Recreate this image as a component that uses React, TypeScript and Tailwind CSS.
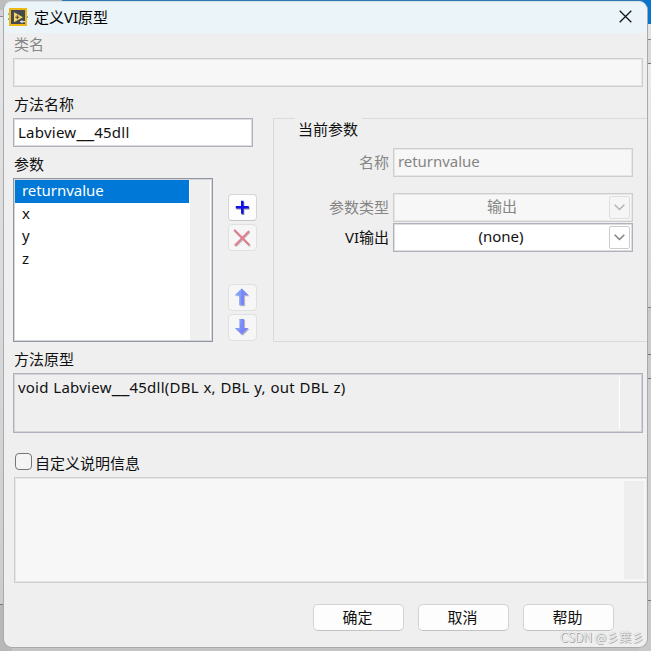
import type { ReactNode } from 'react'
import { clsx } from 'clsx'

const PARAMS = ['returnvalue', 'x', 'y', 'z']
const ACTIONS = ['确定', '取消', '帮助']

const DIM_FRAME = 'border border-[#cecece] bg-[#f7f7f7] p-px shadow-[inset_0_0_0_1px_#e6e6e6]'
const LIVE_FRAME = 'border border-[#b0b1ba] bg-white p-px shadow-[inset_0_0_0_1px_#dcdce2]'

/** Method prototype dialog, floating over the edge of the main window. */
export default function App() {
  return (
    <div className="relative h-[651px] w-[651px] overflow-hidden bg-[#c4c4c4] pt-px font-['Noto_Sans','Noto_Sans_CJK_SC',sans-serif] text-[15px] leading-[22px] text-[#111]">
      <Backdrop />
      <div className="relative ml-[3px] flex h-[647px] w-[645px] flex-col overflow-hidden rounded-[9px] border border-[#a9aaab] border-t-[#d5e2ea] bg-[#efefef]">
        <TitleBar />
        <main className="flex flex-1 flex-col pl-[9px]">
          <Label dim>类名</Label>
          <div className={clsx('mt-[2px] h-[29px] w-[630px]', DIM_FRAME)} />

          <div className="flex h-[254px]">
            <div className="w-[200px] shrink-0 pt-[6px]">
              <Label>方法名称</Label>
              <div className={clsx('mt-[2px] h-[29px] w-[240px]', LIVE_FRAME)}>
                <div className="pl-[3px] leading-[24px]"><MethodName /></div>
              </div>
              <div className="h-[6px]" />
              <Label>参数</Label>
              <ParamList />
            </div>
            <div className="ml-[15px] flex w-[29px] shrink-0 flex-col pt-[107px]">
              <ToolButton><PlusIcon /></ToolButton>
              <ToolButton dim className="mt-[3px]"><CrossIcon /></ToolButton>
              <ToolButton dim className="mt-[33px]"><ArrowIcon /></ToolButton>
              <ToolButton dim className="mt-[3px]"><ArrowIcon down /></ToolButton>
            </div>
            <CurrentParam />
          </div>

          <div className="h-[7px]" />
          <Label>方法原型</Label>
          <div className="mt-[2px] flex h-[60px] w-[630px] justify-between border border-[#b0b1ba] py-[3px] pl-[4px] pr-[22px] shadow-[inset_0_0_0_1px_#d2d2d8]">
            <span className="-mt-px tracking-[.2px] [word-spacing:.6px]">
              void <MethodName />(DBL x, DBL y, out DBL z)
            </span>
            <span className="w-[1.5px] bg-white" />
          </div>

          <label className="mt-[19px] flex h-[22px] items-center pl-[2px]">
            <span className="mb-[4px] size-[17px] rounded-[4px] border-[1.5px] border-[#767676] bg-[#f4f4f4]" />
            <span className="ml-[3px]">自定义说明信息</span>
          </label>
          <div className="ml-px mt-[3px] flex h-[106px] justify-end border border-r-0 border-[#cecece] bg-[#f7f7f7] py-[3px] pr-[3px] shadow-[inset_0_0_0_1px_#e6e6e6]">
            <div className="w-[20px] bg-[#eeeeee]" />
          </div>

          <div className="mt-[21px] flex gap-[14px] pl-[300px]">
            {ACTIONS.map((action) => (
              <button
                key={action}
                className="h-[27px] w-[91px] rounded-[5px] border border-[#d3d3d3] border-b-[#c3c3c3] bg-[#fdfdfd] pb-px pr-[2px]"
              >
                {action}
              </button>
            ))}
          </div>
        </main>
      </div>
      <div className="absolute left-[560px] top-[628px] whitespace-nowrap font-['Noto_Sans_CJK_SC',sans-serif] text-[12.5px] font-light leading-[18px] text-[#fafafa] [text-shadow:1px_1px_0_#999,0_0_1px_#999]">
        CSDN @彡葉彡
      </div>
    </div>
  )
}

/** Slivers of the main window that show around the dialog. */
function Backdrop() {
  return (
    <div className="absolute inset-0 flex flex-col">
      <div className="flex h-[10px] shrink-0">
        <div className="w-[62px] bg-[#bdbdbd]" />
        <div className="flex-1 bg-[#3276b1]" />
        <div className="w-[8px] bg-[#0874d0]" />
      </div>
      <div className="flex flex-1 justify-between">
        <div className="flex w-[12px] flex-col bg-[#d3d3d3]">
          <div className="h-[6px]" />
          <div className="h-px bg-[#8c8c8c]" />
          <div className="h-[587px] bg-linear-to-b from-[#e6e6e6] to-[#cccccc]" />
          <div className="h-px bg-[#777b80]" />
          <div className="flex-1 bg-[#b8b8b8]" />
        </div>
        <div className="flex w-[12px] flex-col bg-[#c9c9c9]">
          <div className="h-[14px] bg-[#0874d0]" />
          <div className="h-[15px] bg-[#e3e3e3]" />
          <div className="h-px bg-[#858585]" />
          <div className="h-[23px] bg-[#dadada]" />
          <div className="h-px bg-[#777]" />
          <div className="h-[243px] bg-linear-to-b from-[#ececec] to-[#d3d3d3]" />
          <div className="h-px bg-[#858585]" />
          <div className="h-[46px] bg-[#cbcbcb]" />
          <div className="h-px bg-[#70757b]" />
          <div className="h-[23px] bg-[#cbcbcb]" />
          <div className="h-px bg-[#777]" />
          <div className="h-[221px] bg-[#cecece]" />
          <div className="h-px bg-[#777b88]" />
        </div>
      </div>
    </div>
  )
}

function TitleBar() {
  return (
    <header className="flex h-[31px] shrink-0 items-center bg-[#ebf4f8] pb-[2px] pl-[4px] pr-[15px]">
      <AppIcon />
      <h1 className="ml-[6px] flex-1 text-[15px] leading-[20px] text-black">定义VI原型</h1>
      <svg width="13" height="13" viewBox="0 0 13 13" stroke="#151515" strokeWidth="1.3">
        <path d="M.7.7l11.6 11.6M12.3.7L.7 12.3" />
      </svg>
    </header>
  )
}

function Label({ children, dim }: { children: ReactNode; dim?: boolean }) {
  return <div className={clsx('h-[23px] pl-px leading-[23px]', dim && 'text-[#858585]')}>{children}</div>
}

function MethodName() {
  return (
    <span className="tracking-[.25px]">
      Labview<span className="text-[20px] leading-none tracking-normal">__</span>45dll
    </span>
  )
}

function ParamList() {
  return (
    <div className="mt-[2px] flex h-[164px] w-[200px] border border-[#92969f] bg-white p-px shadow-[inset_0_0_0_1px_#d3d6db]">
      <ul className="w-[175px]">
        {PARAMS.map((name, i) => (
          <li
            key={name}
            className={clsx(
              'h-[22.7px] w-[174px] pl-[7px] leading-[21px]',
              i === 0 && 'bg-[#0078d7] tracking-[-.05px] text-white',
            )}
          >
            {name}
          </li>
        ))}
      </ul>
      <div className="flex-1 border-r border-white bg-[#efefef]" />
    </div>
  )
}

/** Fields of the selected parameter; the frame runs off the dialog's right edge. */
function CurrentParam() {
  return (
    <section className="ml-[16px] flex flex-1 flex-col pt-[31px]">
      <div className="flex h-[224px] shrink-0 flex-col border border-r-0 border-[#dadada]">
        <h2 className="-mt-px ml-[21px] h-[22px] w-[67px] bg-[#efefef] pl-[3px]">当前参数</h2>
        <Field label="名称" dim className="mt-[8px]">
          <span className="pl-[3px] tracking-[-.05px]">returnvalue</span>
        </Field>
        <Field label="参数类型" dim className="mt-[16px]">
          <span className="flex-1 text-center">输出</span>
          <DropButton dim />
        </Field>
        <Field label="VI输出" className="mt-px">
          <span className="flex-1 pr-[2px] text-center">(none)</span>
          <DropButton />
        </Field>
      </div>
    </section>
  )
}

function Field({ label, dim, className, children }: { label: string; dim?: boolean; className?: string; children: ReactNode }) {
  return (
    <div className={clsx('flex h-[29px] items-center leading-[20px]', dim && 'text-[#858585]', className)}>
      <span className="w-[115px] pb-[2px] text-right">{label}</span>
      <div className={clsx('ml-[4px] h-[29px] w-[240px]', dim ? DIM_FRAME : LIVE_FRAME)}>
        <div className="flex h-[25px] items-center leading-[23px] [&>span:first-child]:pb-[2px]">{children}</div>
      </div>
    </div>
  )
}

function DropButton({ dim }: { dim?: boolean }) {
  return (
    <span
      className={clsx(
        'mr-px flex h-[23px] w-[21px] items-center justify-center rounded-[2px] border',
        dim ? 'border-[#dedede] bg-[#f5f5f5]' : 'border-[#cccccc] bg-white',
      )}
    >
      <svg width="11" height="7" viewBox="0 0 11 7" fill="none" stroke={dim ? '#b4b4b4' : '#808080'} strokeWidth="1.5">
        <path d="M.7.8l4.8 4.7L10.3.8" />
      </svg>
    </span>
  )
}

function ToolButton({ children, dim, className }: { children: ReactNode; dim?: boolean; className?: string }) {
  return (
    <button
      className={clsx(
        'flex h-[27px] w-[29px] shrink-0 items-center justify-center rounded-[4px] border pr-px',
        dim ? 'border-[#e0e0e0] bg-[#f6f6f6]' : 'border-[#d6d6d6] border-b-[#c6c6c6] bg-[#fdfdfd]',
        className,
      )}
    >
      {children}
    </button>
  )
}

function PlusIcon() {
  return (
    <svg width="15" height="15" viewBox="0 0 15 15" fill="none" strokeWidth="2.6">
      <path d="M8 2v13M1.5 8.2h13" stroke="#8e8e8e" />
      <path d="M7.3 .8v13M.8 7.2h13" stroke="#1111ee" />
    </svg>
  )
}

function CrossIcon() {
  return (
    <svg width="18" height="18" viewBox="0 0 18 18" fill="none" strokeLinecap="round">
      <path d="M2.5 2.5l14 14M16 3.5L3.5 16.5" stroke="#b9b9b9" strokeWidth="2" />
      <path d="M1.8 1.5l14 14M15.5 2.7L2.5 16" stroke="#e07f8f" strokeWidth="2.2" />
    </svg>
  )
}

function ArrowIcon({ down }: { down?: boolean }) {
  const d = down ? 'M5.5 1h4.6v9h4.4L7.8 16.8 1 10h4.5z' : 'M7.8 .5l6.7 6.8h-4.4v10H5.5v-10H1z'
  return (
    <svg width="16" height="19" viewBox="0 0 16 19">
      <path d={d} fill="#bcbcc0" transform="translate(1 1)" />
      <path d={d} fill="#7b85f7" />
      <path d={down ? 'M5.5 1h2v9H1l3 3 3.5-3z' : 'M7.8 .5L1 7.3h4.5v10h1.4V6z'} fill="#82a2f5" />
    </svg>
  )
}

/** LabVIEW icon: yellow frame, grey plate, run arrow. */
function AppIcon() {
  return (
    <svg width="20" height="18" viewBox="0 0 20 18">
      <path d="M0 6h3M0 11h3M17 9h3" stroke="#4ba0c0" strokeWidth="1.5" />
      <path d="M2 1h16v16H2z" fill="#454951" stroke="#eeb817" strokeWidth="2" />
      <path d="M6 4.2l9 5-9 5z" fill="#f7d969" />
      <path d="M7.3 9.2h4M9.3 7.2v4" stroke="#49443a" strokeWidth="1.1" />
      <path d="M12 13.7h5M14 12.2v3" stroke="#ddd" strokeWidth="1.2" />
    </svg>
  )
}
